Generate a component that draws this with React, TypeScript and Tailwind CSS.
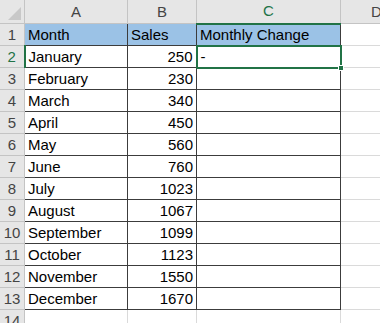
import React from 'react'

const rows: [string, string][] = [
  ['January', '250'],
  ['February', '230'],
  ['March', '340'],
  ['April', '450'],
  ['May', '560'],
  ['June', '760'],
  ['July', '1023'],
  ['August', '1067'],
  ['September', '1099'],
  ['October', '1123'],
  ['November', '1550'],
  ['December', '1670'],
]

const hdr = 'bg-[#e6e6e6] border border-[#c4c4c4] text-[#444] font-normal text-center p-0'
const grid = 'border border-[#dadada] p-0'
const dark = 'border border-[#3c3c3c] p-0'

export default function App() {
  return (
    <div className="w-[380px] h-[323px] overflow-hidden bg-white text-[15px] leading-[18px] text-black" style={{ fontFamily: '"Liberation Sans", Arial, sans-serif' }}>
      <table className="table-fixed border-collapse -mt-px -ml-px w-[405px] min-w-[405px]">
        <colgroup>
          <col className="w-[25px]" />
          <col className="w-[103px]" />
          <col className="w-[69px]" />
          <col className="w-[144px]" />
          <col className="w-[64px]" />
        </colgroup>
        <thead>
          <tr className="h-[24px]">
            <th className={`${hdr} relative`}>
              <svg className="absolute right-[3px] bottom-[3px]" width="13" height="13" viewBox="0 0 13 13">
                <polygon points="13,0 13,13 0,13" fill="#c8c8c8" />
              </svg>
            </th>
            <th className={hdr}>A</th>
            <th className={hdr}>B</th>
            <th className={`${hdr} bg-[#d2d2d2] text-[#217346] border-b-2 border-b-[#217346]`}>C</th>
            <th className={`${hdr} text-left pl-[30px]`}>D</th>
          </tr>
        </thead>
        <tbody>
          <tr className="h-[22px]">
            <td className={hdr}>1</td>
            <td className={`${dark} bg-[#9bc2e6] pl-[3px]`}>Month</td>
            <td className={`${dark} bg-[#9bc2e6] pl-[3px]`}>Sales</td>
            <td className={`${dark} bg-[#9bc2e6] pl-[3px]`}>Monthly Change</td>
            <td className={grid}></td>
          </tr>
          {rows.map(([m, s], i) => (
            <tr key={m} className="h-[22px]">
              <td className={i === 0 ? `${hdr} bg-[#d2d2d2] text-[#217346] border-r-2 border-r-[#217346]` : hdr}>{i + 2}</td>
              <td className={`${dark} pl-[3px]`}>{m}</td>
              <td className={`${dark} text-right pr-[3px]`}>{s}</td>
              {i === 0 ? (
                <td className="border-2 border-[#217346] p-0 pl-[3px] relative">
                  -
                  <span className="absolute -right-[4px] -bottom-[4px] w-[6px] h-[6px] bg-[#217346] border border-white" />
                </td>
              ) : (
                <td className={dark}></td>
              )}
              <td className={grid}></td>
            </tr>
          ))}
          <tr className="h-[22px]">
            <td className={hdr}>14</td>
            <td className={grid}></td>
            <td className={grid}></td>
            <td className={grid}></td>
            <td className={grid}></td>
          </tr>
        </tbody>
      </table>
    </div>
  )
}
